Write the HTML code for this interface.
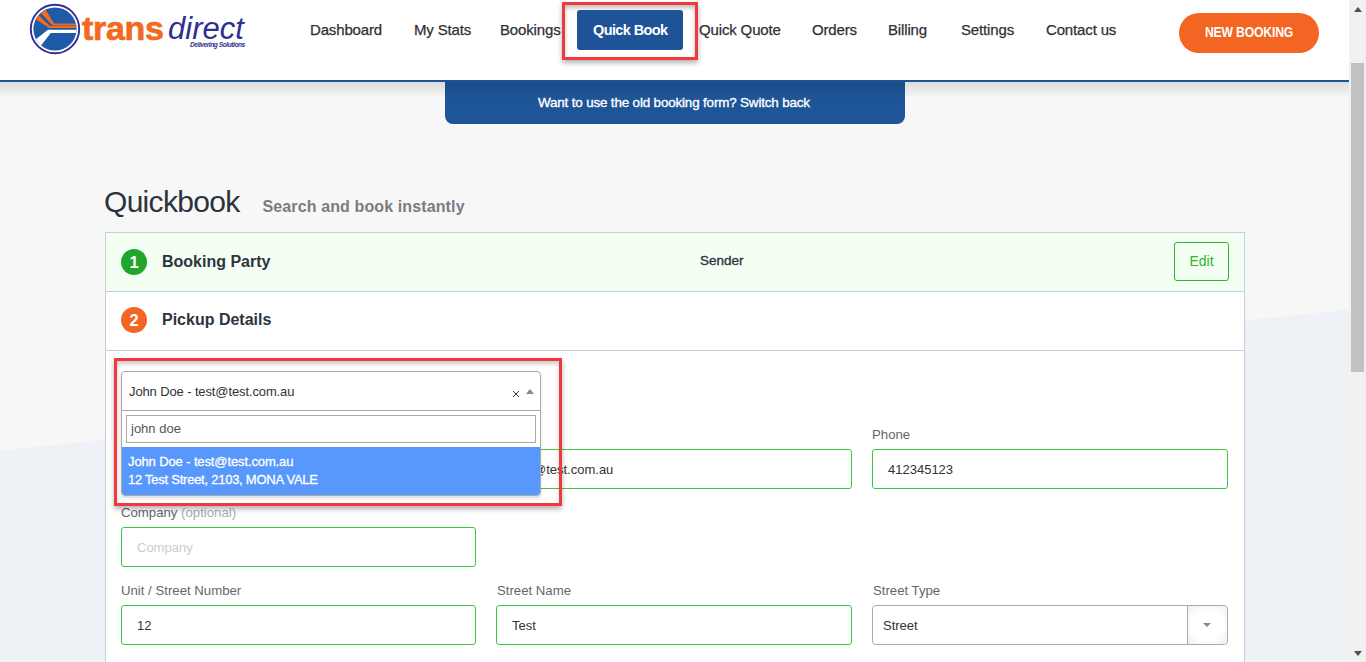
<!DOCTYPE html>
<html><head><meta charset="utf-8">
<style>
*{box-sizing:border-box;margin:0;padding:0}
html,body{width:1366px;height:662px;overflow:hidden;font-family:"Liberation Sans",sans-serif;background:#f7f7f7}
.a{position:absolute}
#bg2{position:absolute;left:0;top:0;width:1349px;height:662px;background:#eef2f7;clip-path:polygon(0 450.5px,1349px 309.5px,1349px 662px,0 662px)}
#hdr{position:absolute;left:0;top:0;width:1349px;height:82px;background:#fff;border-bottom:2px solid #1f5397}
#hshadow{position:absolute;left:0;top:82px;width:1349px;height:16px;background:linear-gradient(rgba(0,0,0,.11),rgba(0,0,0,.075) 35%,rgba(0,0,0,0))}
.nav{position:absolute;top:20px;font-size:15px;color:#2f2f36;letter-spacing:-0.15px;white-space:nowrap;line-height:20px;-webkit-text-stroke:0.25px #2f2f36}
#sb{position:absolute;left:1349px;top:0;width:17px;height:662px;background:#f1f1f1}
#thumb{position:absolute;left:1351px;top:63px;width:13px;height:309px;background:#c1c1c1}
.t{position:absolute;white-space:nowrap}
.lbl{position:absolute;font-size:13.2px;color:#666;white-space:nowrap;line-height:16px;margin-top:1px}
.inp{position:absolute;height:40px;border:1px solid #3cc83c;border-radius:3px;background:#fff}
.val{position:absolute;font-size:13px;color:#333;white-space:nowrap;line-height:16px;margin-top:0.5px}
</style></head><body>
<div id="bg2"></div>

<!-- card -->
<div class="a" style="left:105px;top:232px;width:1140px;height:440px;background:#fff;border:1px solid #c6cfd9"></div>
<div class="a" style="left:106px;top:233px;width:1138px;height:59px;background:#f3fff3;border-bottom:1px solid #c6cfd9"></div>
<div class="a" style="left:106px;top:292px;width:1138px;height:59px;background:#fff;border-bottom:1px solid #c6cfd9"></div>

<div id="hdr"></div>

<!-- logo -->
<svg class="a" style="left:28px;top:3px" width="54" height="52" viewBox="0 0 54 52">
  <defs><clipPath id="cc"><circle cx="27" cy="26" r="21.6"/></clipPath></defs>
  <circle cx="27" cy="26" r="24.2" fill="#fff" stroke="#2e3192" stroke-width="1.9"/>
  <circle cx="27" cy="26" r="21.6" fill="#1f5aa6"/>
  <g clip-path="url(#cc)">
    <polygon fill="#f26a21" points="11.7,-3.3 26,20.6 52,20.6 52,22.4 24.5,22.4 0.3,-3.3"/>
    <polygon fill="#f26a21" points="-5.8,-3.3 22,23 52,23 52,25 21,25 -22.6,-3.3"/>
    <polygon fill="#fff" points="-4.2,45.7 20,26.7 52,26.7 52,30 22.8,30 5.2,52.5"/>
  </g>
</svg>
<div class="t" style="left:82px;top:8.5px;font-size:34px;font-weight:bold;color:#f26a21;letter-spacing:-0.3px;line-height:38px;-webkit-text-stroke:0.7px #f26a21">trans</div>
<div class="t" style="left:168px;top:10px;font-size:31px;font-style:italic;color:#2e3192;line-height:38px">direct</div>
<div class="t" style="left:190px;top:41px;font-size:6.6px;font-style:italic;font-weight:bold;color:#2e3192;line-height:8px;letter-spacing:-0.45px">Delivering Solutions</div>

<!-- nav -->
<div class="nav" style="left:310px">Dashboard</div>
<div class="nav" style="left:414px">My Stats</div>
<div class="nav" style="left:500px">Bookings</div>
<div class="a" style="left:562px;top:2px;width:136px;height:58px;border:3px solid #ee3a3f;box-shadow:0 3px 5px rgba(0,0,0,.3), inset 0 3px 4px rgba(0,0,0,.25)"></div>
<div class="a" style="left:577px;top:10px;width:106px;height:40px;background:#1f5397;border-radius:3px"></div>
<div class="nav" style="left:593px;color:#fff;font-weight:bold;font-size:14.5px;letter-spacing:-0.6px;-webkit-text-stroke:0 #fff">Quick Book</div>
<div class="nav" style="left:699px">Quick Quote</div>
<div class="nav" style="left:812px">Orders</div>
<div class="nav" style="left:888px">Billing</div>
<div class="nav" style="left:961px">Settings</div>
<div class="nav" style="left:1046px">Contact us</div>
<div class="a" style="left:1179px;top:13px;width:140px;height:40px;background:#f26522;border-radius:20px"></div>
<div class="t" style="left:1205px;top:23px;font-size:14px;font-weight:bold;color:#fff;letter-spacing:-0.2px;line-height:18px;transform:scaleX(0.87);transform-origin:0 0">NEW BOOKING</div>

<!-- banner -->
<div class="a" style="left:445px;top:82px;width:460px;height:42px;background:#1e5597;border-radius:0 0 8px 8px"></div>
<div class="t" style="left:538px;top:94.5px;font-size:13.4px;color:#fff;line-height:16px;-webkit-text-stroke:0.35px #fff;letter-spacing:-0.15px">Want to use the old booking form? Switch back</div>

<div id="hshadow"></div>

<!-- heading -->
<div class="t" style="left:104px;top:186px;font-size:30px;color:#2d333b;line-height:32px;letter-spacing:-0.7px">Quickbook</div>
<div class="t" style="left:262.5px;top:197px;font-size:16px;font-weight:bold;color:#777d84;line-height:20px;letter-spacing:0.12px">Search and book instantly</div>

<!-- rows -->
<div class="a" style="left:121px;top:249px;width:26px;height:26px;border-radius:13px;background:#22a52f;color:#fff;font-size:16.5px;font-weight:bold;text-align:center;line-height:27px">1</div>
<div class="t" style="left:162px;top:252px;font-size:16px;font-weight:bold;color:#2e3340;line-height:20px">Booking Party</div>
<div class="t" style="left:700px;top:253px;font-size:13.5px;color:#2e3340;line-height:16px;-webkit-text-stroke:0.35px #2e3340">Sender</div>
<div class="a" style="left:1174px;top:242px;width:55px;height:39px;border:1px solid #2db52d;border-radius:3px;color:#2db52d;font-size:14px;text-align:center;line-height:37px">Edit</div>
<div class="a" style="left:121px;top:307px;width:26px;height:26px;border-radius:13px;background:#f26522;color:#fff;font-size:16.5px;font-weight:bold;text-align:center;line-height:27px">2</div>
<div class="t" style="left:162px;top:310px;font-size:16px;font-weight:bold;color:#2e3340;line-height:20px">Pickup Details</div>

<!-- fields -->
<div class="lbl" style="left:872px;top:426px">Phone</div>
<div class="inp" style="left:496px;top:449px;width:356px"></div>
<div class="val" style="left:512px;top:461px">test@test.com.au</div>
<div class="inp" style="left:872px;top:449px;width:356px"></div>
<div class="val" style="left:888px;top:461px">412345123</div>

<div class="lbl" style="left:121px;top:504px">Company <span style="color:#aab">(optional)</span></div>
<div class="inp" style="left:121px;top:527px;width:355px"></div>
<div class="val" style="left:137px;top:539px;color:#c8ccd2">Company</div>

<div class="lbl" style="left:121px;top:582px">Unit / Street Number</div>
<div class="inp" style="left:121px;top:605px;width:355px"></div>
<div class="val" style="left:137px;top:617px">12</div>
<div class="lbl" style="left:497px;top:582px">Street Name</div>
<div class="inp" style="left:496px;top:605px;width:356px"></div>
<div class="val" style="left:512px;top:617px">Test</div>
<div class="lbl" style="left:873px;top:582px">Street Type</div>
<div class="a" style="left:872px;top:605px;width:356px;height:40px;border:1px solid #aaa;border-radius:4px;background:#fff"></div>
<div class="a" style="left:1187px;top:606px;width:40px;height:38px;border-left:1px solid #aaa;background:radial-gradient(#fff 55%,#eee);border-radius:0 4px 4px 0"></div>
<div class="a" style="left:1202.5px;top:623px;width:0;height:0;border-left:4.5px solid transparent;border-right:4.5px solid transparent;border-top:4.5px solid #888"></div>
<div class="val" style="left:883px;top:617px">Street</div>

<!-- dropdown -->
<div class="a" style="left:114px;top:358px;width:448px;height:148px;border:3px solid #ee3a3f;box-shadow:0 3px 5px rgba(0,0,0,.3), inset 0 3px 4px rgba(0,0,0,.2)"></div>
<div class="a" style="left:121px;top:371px;width:420px;height:125px;background:#fff;border:1px solid #aaa;border-radius:4px;overflow:hidden;box-shadow:0 2px 3px rgba(0,0,0,.15)">
  <div class="a" style="left:0;top:38px;width:418px;height:1px;background:#aaa"></div>
  <div class="a" style="left:4px;top:43px;width:410px;height:28px;border:1px solid #aaa"></div>
  <div class="a" style="left:0;top:75px;width:418px;height:49px;background:#5897fb"></div>
</div>
<div class="val" style="left:129px;top:383px;letter-spacing:-0.12px">John Doe - test@test.com.au</div>
<svg class="a" style="left:511px;top:389px" width="10" height="10" viewBox="0 0 10 10"><path d="M2 2L8 8M8 2L2 8" stroke="#3a3a3a" stroke-width="1"/></svg>
<div class="a" style="left:526px;top:389px;width:0;height:0;border-left:4px solid transparent;border-right:4px solid transparent;border-bottom:5px solid #888"></div>
<div class="val" style="left:131px;top:420px;color:#555">john doe</div>
<div class="val" style="left:128px;top:453px;color:#fff;letter-spacing:-0.12px;-webkit-text-stroke:0.3px #fff">John Doe - test@test.com.au</div>
<div class="val" style="left:128px;top:471px;color:#fff;letter-spacing:-0.25px;-webkit-text-stroke:0.3px #fff">12 Test Street, 2103, MONA VALE</div>

<!-- scrollbar -->
<div id="sb"></div>
<div id="thumb"></div>
<div class="a" style="left:1353.5px;top:7px;width:0;height:0;border-left:4.5px solid transparent;border-right:4.5px solid transparent;border-bottom:5px solid #505050"></div>
<div class="a" style="left:1353.5px;top:651px;width:0;height:0;border-left:4.5px solid transparent;border-right:4.5px solid transparent;border-top:5px solid #505050"></div>
</body></html>
